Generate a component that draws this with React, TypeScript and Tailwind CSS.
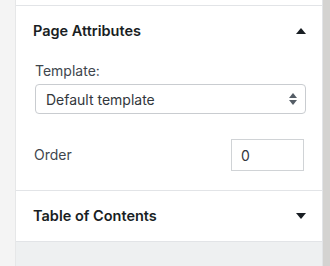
import React from 'react';

function Caret({ up }: { up?: boolean }) {
  return (
    <svg width="10" height="6" viewBox="0 0 10 6" className="shrink-0">
      {up ? <path d="M0 6 L5 0 L10 6 Z" fill="#191e23" /> : <path d="M0 0 L5 6 L10 0 Z" fill="#191e23" />}
    </svg>
  );
}

export default function App() {
  return (
    <div
      className="w-[330px] h-[266px] flex overflow-hidden bg-[#d4d3d1]"
      style={{ fontFamily: 'Inter, "Noto Sans", sans-serif' }}
    >
      {/* left strip */}
      <div className="w-[16px] h-full bg-[#f4f4f4] border-r border-[#e6e7e8]" />

      {/* sidebar panel */}
      <div className="w-[307px] h-full flex flex-col bg-white border-r border-[#e2e4e7]">
        <div className="h-[6px] border-b border-[#e2e4e7]" />

        {/* Page Attributes */}
        <div className="h-[185px] flex flex-col border-b border-[#e2e4e7]">
          <div className="h-[50px] flex items-center justify-between pl-[17px] pr-[16px]">
            <span className="text-[14.5px] font-semibold text-[#191e23]">Page Attributes</span>
            <Caret up />
          </div>
          <div className="pl-[19px] pr-[16px] mt-[5px]">
            <div className="text-[14px] leading-[20px] text-[#40464d]">Template:</div>
            <div className="mt-[3px] h-[30px] flex items-center justify-between border border-[#c9ccd0] rounded-[4px] pl-[10px] pr-[8px]">
              <span className="text-[14px] text-[#32373c]">Default template</span>
              <svg width="8" height="12" viewBox="0 0 8 12">
                <path d="M0 5 L4 0 L8 5 Z" fill="#555d66" />
                <path d="M0 7 L4 12 L8 7 Z" fill="#555d66" />
              </svg>
            </div>
            <div className="mt-[25px] flex items-center justify-between pr-[2px]">
              <span className="text-[14px] text-[#40464d] -ml-[1px] -mt-[2px]">Order</span>
              <div className="w-[73px] h-[32px] flex items-center border border-[#d0d3d6] pl-[9px]">
                <span className="text-[14px] text-[#32373c]">0</span>
              </div>
            </div>
          </div>
        </div>

        {/* Table of Contents */}
        <div className="h-[51px] flex items-center justify-between pl-[17px] pr-[16px] border-b border-[#e2e4e7]">
          <span className="text-[14.5px] font-semibold text-[#191e23]">Table of Contents</span>
          <Caret />
        </div>

        <div className="flex-1 bg-[#eef0f1]" />
      </div>
    </div>
  );
}
